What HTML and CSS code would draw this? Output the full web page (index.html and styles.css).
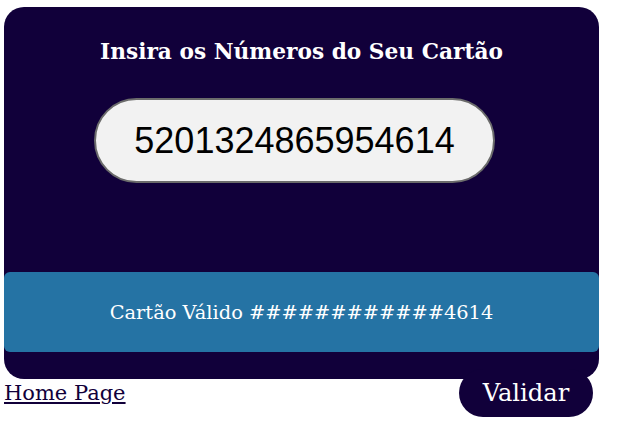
FILE: index.html
```html
<!DOCTYPE html>
<html lang="pt">
<head>
<meta charset="utf-8">
<title>Validar Cartão</title>
<link rel="stylesheet" href="styles.css">
</head>
<body>
<div class="page">
  <section class="card">
    <h1 class="title">Insira os Números do Seu Cartão</h1>
    <input class="number" type="text" value="5201324865954614">
    <div class="result">Cartão Válido ############4614</div>
  </section>
  <div class="footer">
    <a class="home" href="#">Home Page</a>
    <button class="validate" type="button">Validar</button>
  </div>
</div>
</body>
</html>
```
FILE: styles.css
```css
html, body {
  margin: 0;
  padding: 0;
  background: #ffffff;
}
.page {
  width: 595px;
  margin: 7px 0 0 4px;
  font-family: "DejaVu Serif", Georgia, serif;
}
.card {
  background: #11003a;
  border-radius: 20px;
  height: 372px;
  display: flex;
  flex-direction: column;
  align-items: center;
  box-sizing: border-box;
  padding-top: 30px;
}
.title {
  margin: 0;
  color: #ffffff;
  font-size: 21.7px;
  font-weight: bold;
  line-height: 30px;
}
.number {
  align-self: flex-start;
  margin: 31px 0 0 90px;
  width: 401px;
  height: 85px;
  box-sizing: border-box;
  border: 2px solid #6b6b6b;
  border-radius: 43px;
  background: #f2f2f2;
  font-family: "Liberation Sans", Arial, sans-serif;
  font-size: 36px;
  text-align: center;
  color: #000000;
  padding: 0;
  outline: none;
}
.result {
  margin-top: 89px;
  align-self: stretch;
  height: 80px;
  background: #2573a4;
  border-radius: 6px;
  color: #ffffff;
  font-size: 19.4px;
  display: flex;
  align-items: center;
  justify-content: center;
}
.footer {
  display: flex;
  justify-content: space-between;
  align-items: flex-start;
}
.home {
  color: #11003a;
  font-size: 21px;
  line-height: 28px;
}
.validate {
  margin-top: -10px;
  margin-right: 6px;
  width: 134px;
  height: 48px;
  border: none;
  border-radius: 24px;
  background: #11003a;
  color: #ffffff;
  font-family: "DejaVu Serif", Georgia, serif;
  font-size: 24.2px;
  padding: 0;
}
```
